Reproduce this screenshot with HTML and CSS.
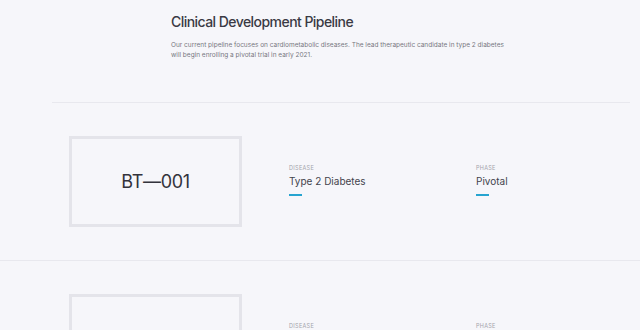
FILE: index.html
```html
<!DOCTYPE html>
<html lang="en">

<head>
    <meta charset="UTF-8">
    <meta name="viewport" content="width=device-width, initial-scale=1.0">
    <title>Pipeline</title>
    <link rel="stylesheet" href="styles.css">
</head>

<body>
    <div class="intro">
        <h1>Clinical Development Pipeline</h1>
        <p>Our current pipeline focuses on cardiometabolic diseases. The lead therapeutic candidate in type 2 diabetes
            will begin enrolling a pivotal trial in early 2021.</p>
    </div>
    <div class="divider"></div>
    <div class="pipeline">
        <div class="item">
            <div class="item-code">BT—001</div>
            <div class="item-info">
                <div class="item-col">
                    <span class="label">Disease</span>
                    <span class="value">Type 2 Diabetes</span>
                    <span class="bar"></span>
                </div>
                <div class="item-col">
                    <span class="label">Phase</span>
                    <span class="value">Pivotal</span>
                    <span class="bar"></span>
                </div>
            </div>
        </div>
        <div class="item">
            <div class="item-code"></div>
            <div class="item-info">
                <div class="item-col">
                    <span class="label">Disease</span>
                    <span class="value">Type 2 Diabetes</span>
                    <span class="bar"></span>
                </div>
                <div class="item-col">
                    <span class="label">Phase</span>
                    <span class="value">Pivotal</span>
                    <span class="bar"></span>
                </div>
            </div>
        </div>
    </div>
</body>

</html>
```

FILE: styles.css
```css
* {
    margin: 0;
    padding: 0;
    box-sizing: border-box;
}

body {
    background-color: #f6f6fa;
    font-family: Inter, "Liberation Sans", sans-serif;
    color: #3a3a44;
}

.intro {
    padding: 12px 0 0 171px;
    height: 102px;
}

.intro h1 {
    font-size: 14px;
    font-weight: 500;
    letter-spacing: -0.55px;
    line-height: 20px;
}

.intro p {
    margin-top: 8px;
    width: 338px;
    font-size: 6.5px;
    line-height: 10px;
    color: #77777f;
}

.divider {
    height: 1px;
    margin: 0 10px 0 52px;
    background-color: #e8e8ee;
}

.item {
    display: flex;
    align-items: center;
    padding: 33px 0 33px 69px;
    border-bottom: 1px solid #e8e8ee;
}

.item-code {
    flex-shrink: 0;
    width: 173px;
    height: 91px;
    border: 3px solid #e4e4ea;
    display: flex;
    align-items: center;
    justify-content: center;
    font-size: 18px;
    letter-spacing: -0.3px;
    color: #33333c;
}

.item-info {
    display: flex;
    margin-left: 47px;
    margin-top: -3px;
}

.item-col {
    width: 187px;
    display: flex;
    flex-direction: column;
}

.item-col .label {
    font-size: 5.5px;
    text-transform: uppercase;
    letter-spacing: 0.3px;
    color: #a3a3ab;
    line-height: 8px;
}

.item-col .value {
    font-size: 10px;
    line-height: 14px;
    margin-top: 2px;
    color: #44444d;
}

.item-col .bar {
    display: block;
    width: 13px;
    height: 2px;
    margin-top: 6px;
    background-color: #27a4d0;
}
```
